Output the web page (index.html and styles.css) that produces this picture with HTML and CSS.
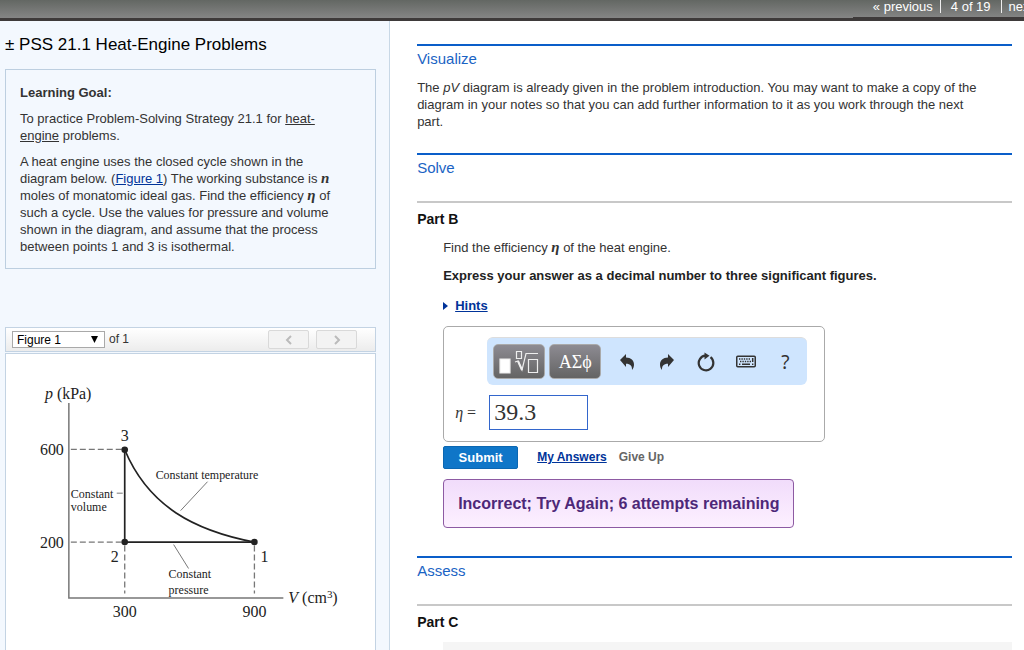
FILE: index.html
```html
<!DOCTYPE html>
<html lang="en">
<head>
<meta charset="utf-8">
<title>PSS 21.1 Heat-Engine Problems</title>
<link rel="stylesheet" href="styles.css">
</head>
<body>
<header class="topbar">
  <nav class="pager" aria-label="Items">
    <a class="pager-link" href="#">« previous</a>
    <span class="pager-count">4 of 19</span>
    <a class="pager-link" href="#">next »</a>
  </nav>
</header>
<div class="page">
  <aside class="side">
    <h1 class="title">± PSS 21.1 Heat-Engine Problems</h1>
    <section class="goal">
      <h2 class="goal-title">Learning Goal:</h2>
      <p class="goal-text">To practice Problem-Solving Strategy 21.1 for <a class="term" href="#">heat-<br>engine</a> problems.</p>
      <p class="goal-text">A heat engine uses the closed cycle shown in the diagram below. (<a class="link" href="#figure">Figure 1</a>) The working substance is <i class="math">n</i> moles of monatomic ideal gas. Find the efficiency <i class="math">η</i> of such a cycle. Use the values for pressure and volume shown in the diagram, and assume that the process between points 1 and 3 is isothermal.</p>
    </section>
    <div class="figbar">
      <div class="select-wrap">
        <select class="figselect" id="figselect" aria-label="Figure"><option>Figure 1</option></select>
        <svg class="caret" viewBox="0 0 7 7" aria-hidden="true"><path d="M0 0h7L3.500 7z"/></svg>
      </div>
      <label class="figcount" for="figselect">of 1</label>
      <div class="fignav">
        <button class="figbtn" type="button" aria-label="Previous figure"><svg viewBox="0 0 8 10"><path d="M6 1L2 5l4 4"/></svg></button>
        <button class="figbtn" type="button" aria-label="Next figure"><svg viewBox="0 0 8 10"><path d="M2 1l4 4-4 4"/></svg></button>
      </div>
    </div>
    <div class="figure" id="figure">
      <svg class="diagram" viewBox="0 0 370 296" role="img" aria-label="pV diagram">
        <g class="axis"><path d="M63 49V244.500H278"/></g>
        <g class="dash"><path d="M65 95.500H118M65 188.500H118M119 192V240M249 192V240"/></g>
        <g class="lead"><path d="M202 128L175 157M168 191L183 215M111 139.500H117"/></g>
        <g class="curve"><path d="M119 96V188.500H249"/><path d="M119 96C143 153 189 177 249 188.500"/></g>
        <circle cx="119" cy="96" r="3.300"/><circle cx="119" cy="188.500" r="3.300"/><circle cx="249" cy="188.500" r="3.300"/>
        <g class="big">
          <text x="39" y="45"><tspan font-style="italic">p</tspan> (kPa)</text>
          <text x="34" y="101">600</text><text x="34" y="194">200</text>
          <text x="115" y="87">3</text><text x="105" y="208">2</text><text x="255" y="208">1</text>
          <text x="107" y="264">300</text><text x="237" y="264">900</text>
          <text x="283" y="250"><tspan font-style="italic">V</tspan> (cm<tspan class="sup" dy="-5">3</tspan><tspan dy="5">)</tspan></text>
        </g>
        <g class="small">
          <text x="150" y="125">Constant temperature</text>
          <text x="65" y="144">Constant</text><text x="65" y="157">volume</text>
          <text x="163" y="225">Constant</text><text x="163" y="241">pressure</text>
        </g>
      </svg>
    </div>
  </aside>
  <main class="main">
    <section class="step">
      <h2 class="step-title">Visualize</h2>
      <p class="step-text">The <i>pV</i> diagram is already given in the problem introduction. You may want to make a copy of the diagram in your notes so that you can add further information to it as you work through the next part.</p>
    </section>
    <section class="step">
      <h2 class="step-title">Solve</h2>
    </section>
    <section class="part">
      <h3 class="part-title">Part B</h3>
      <div class="part-body">
        <p class="ask">Find the efficiency <i class="math">η</i> of the heat engine.</p>
        <p class="express">Express your answer as a decimal number to three significant figures.</p>
        <p class="hints"><svg class="tri" viewBox="0 0 5 8" aria-hidden="true"><path d="M0 0l5 4-5 4z"/></svg><a class="link" href="#">Hints</a></p>
        <form class="answer">
          <div class="tools">
            <button class="palette" type="button" aria-label="Templates">
              <svg class="root-icon" viewBox="0 0 42 26"><path class="solid" d="M2 10h10v14H2z"/><path d="M18.500 2.500h5v7h-5zM30.500 10.500h9v13h-9z"/><path d="M17 13l3-1 4 9L28 4.500H40"/><path class="thick" d="M20 12l4 9"/></svg>
            </button>
            <button class="palette greek" type="button">ΑΣϕ</button>
            <button class="tool" type="button" aria-label="Undo"><svg viewBox="0 0 16 18"><path class="fill" d="M1 7L7 1v3.500c5 0 8 3 8 7 0 2-.6 4-2 5.500 .3-4-1.500-6.300-6-6.300V14z"/></svg></button>
            <button class="tool" type="button" aria-label="Redo"><svg viewBox="0 0 16 18"><path class="fill" d="M15 7L9 1v3.500c-5 0-8 3-8 7 0 2 .6 4 2 5.500-.3-4 1.500-6.300 6-6.300V14z"/></svg></button>
            <button class="tool reset" type="button" aria-label="Reset"><svg viewBox="0 0 20 20"><path class="stroke" d="M14.500 5.200A7.300 7.300 0 1 1 9.500 3.700"/><path class="fill" d="M8.500 .5l5 3.300-5 3.700z"/></svg></button>
            <button class="tool keys" type="button" aria-label="Keyboard shortcuts"><svg viewBox="0 0 20 13"><rect class="frame" x=".75" y="1.250" width="18.500" height="10.500" rx="1"/><path class="dots" d="M3 4h12M4 6.500h11M3 9.300h1.500M16 9.300h1.500"/><path class="bar" d="M6 9.300h8M16.700 3v4"/></svg></button>
            <button class="tool help" type="button" aria-label="Help">?</button>
          </div>
          <div class="entry">
            <label class="entry-label" for="eta"><i>η</i> =</label>
            <input class="entry-input" id="eta" type="text" value="39.3">
          </div>
        </form>
        <div class="actions">
          <button class="submit" type="button">Submit</button>
          <a class="link my" href="#">My Answers</a>
          <a class="giveup" href="#">Give Up</a>
        </div>
        <div class="feedback" role="status">Incorrect; Try Again; 6 attempts remaining</div>
      </div>
    </section>
    <section class="step">
      <h2 class="step-title">Assess</h2>
    </section>
    <section class="part">
      <h3 class="part-title">Part C</h3>
      <div class="part-body locked"></div>
    </section>
  </main>
</div>
</body>
</html>
```
FILE: styles.css
```css
* { box-sizing: border-box; }
body {
  margin: 0;
  height: 100vh;
  overflow: hidden;
  display: flex;
  flex-direction: column;
  font: 13px/17px "Liberation Sans", Arial, sans-serif;
  color: #333;
  background: #fff;
}
h1, h2, h3, p { margin: 0; }
button, select, input { font: inherit; color: inherit; }
.link { color: #039; text-decoration: underline; }

.topbar {
  flex: none;
  display: flex;
  height: 21px;
  overflow: hidden;
  background: linear-gradient(#636763, #858585);
  border-bottom: 3px solid #3e3a3a;
}
.pager {
  display: flex;
  align-items: flex-start;
  margin-left: auto;
  margin-right: -20px;
  padding-left: 20px;
  line-height: 14px;
  color: #fff;
  border-bottom: 1px solid #3e3a3a;
}
.pager-link { color: #fff; text-decoration: none; }
.pager-count { margin: 0 7px; padding: 0 10px; border: solid #eee; border-width: 0 1px; height: 13px; }

.page { flex: 1; display: flex; min-height: 0; }
.side {
  flex: none;
  width: 38.1%;
  display: flex;
  flex-direction: column;
  padding: 13px 13px 0 5px;
  background: #f3f8fe;
  border-right: 1px solid #c8d8e6;
  overflow: hidden;
}
.title { font-size: 17px; line-height: 22px; font-weight: normal; color: #000; }
.goal { margin-top: 13px; padding: 14px 28px 13px 14px; border: 1px solid #bdcfe0; }
.goal-title { font-size: 13px; line-height: 17px; }
.goal-text { margin-top: 9px; }
.term { color: #333; }
.math { font: italic bold 15px/16px "Liberation Serif", "Times New Roman", serif; }

.figbar {
  display: flex;
  align-items: center;
  flex: none;
  height: 25px;
  margin-top: 58px;
  padding: 0 18px 0 6px;
  border: 1px solid #c3d3e3;
  background: linear-gradient(#fff, #ececec);
}
.select-wrap { position: relative; display: flex; }
.figselect {
  appearance: none;
  width: 93px;
  height: 17px;
  padding: 0 4px;
  font-size: 12px;
  line-height: 14px;
  color: #000;
  background: #fff;
  border: 1px solid #a9a9a9;
  border-radius: 0;
}
.caret { position: absolute; right: 7px; top: 5px; width: 7px; height: 7px; pointer-events: none; }
.figcount { margin-left: 4px; font-size: 12px; }
.fignav { display: flex; gap: 7px; margin-left: auto; }
.figbtn {
  width: 41px;
  height: 19px;
  padding: 0;
  display: flex;
  align-items: center;
  justify-content: center;
  border: 1px solid #d9d9d9;
  border-radius: 2px;
  background: #f3f3f3;
}
.figbtn svg { width: 8px; height: 10px; fill: none; stroke: #bbb; stroke-width: 2; }
.figure { flex: 1; margin-top: 1px; background: #fff; border: 1px solid #c3d3e3; border-bottom: 0; }
.diagram { display: block; width: 100%; max-width: 370px; font-family: "Liberation Serif", "Times New Roman", serif; fill: #222; }
.axis { fill: none; stroke: #777; stroke-width: 1.5; }
.dash { fill: none; stroke: #777; stroke-width: 1.3; stroke-dasharray: 6 3; }
.lead { fill: none; stroke: #777; stroke-width: 1; }
.curve { fill: none; stroke: #222; stroke-width: 1.7; }
.big { font-size: 16px; }
.small { font-size: 12px; }
.sup { font-size: 11px; }

.main { flex: 1; min-width: 0; padding: 23px 12px 0 27px; overflow: hidden; }
.step { border-top: 2px solid #0a5ec9; }
.step-title { padding-top: 4px; font-size: 15px; line-height: 18px; font-weight: normal; color: #1a63c4; }
.step-text { margin: 11px 0 23px; padding-right: 24px; }
.part { margin-top: 24px; border-top: 2px solid #c8c8c8; }
.part-title { padding-top: 6px; font-size: 14px; line-height: 20px; color: #111; }
.part-body { margin: 10px 0 28px 26px; }
.express { margin-top: 11px; font-weight: bold; color: #222; }
.hints { display: flex; align-items: center; gap: 7px; margin-top: 13px; font-weight: bold; }
.tri { width: 5px; height: 8px; fill: #039; }
.answer { width: 382px; max-width: 100%; margin-top: 12px; padding: 10px 17px 11px 11px; border: 1px solid #aaa; border-radius: 5px; }
.tools {
  display: flex;
  align-items: center;
  height: 48px;
  margin-left: 32px;
  padding: 0 2px 0 6px;
  background: #cfe5fe;
  border-top: 1px solid #ddd;
  border-radius: 6px;
}
.palette {
  display: flex;
  align-items: center;
  justify-content: center;
  width: 52px;
  height: 35px;
  margin-right: 4px;
  padding: 0;
  color: #fff;
  background: linear-gradient(#8d8b92, #646464);
  border: 1px solid #aaa;
  border-radius: 5px;
}
.greek { margin-right: 6px; font: 18px/20px "Liberation Serif", "Times New Roman", serif; }
.root-icon { width: 42px; height: 26px; fill: none; stroke: #eee; stroke-width: 1.2; }
.solid { fill: #fff; }
.thick { stroke-width: 2; }
.tool { flex: 1; display: flex; align-items: center; justify-content: center; padding: 0; border: 0; background: none; color: #333; }
.tool svg { width: 16px; height: 18px; }
.reset svg { width: 20px; height: 20px; }
.keys svg { width: 20px; height: 13px; }
.fill { fill: #333; }
.stroke { fill: none; stroke: #333; stroke-width: 2.2; }
.frame { fill: none; stroke: #333; stroke-width: 1.5; }
.dots { fill: none; stroke: #333; stroke-width: 1.4; stroke-dasharray: 1.400 1; }
.bar { stroke: #333; stroke-width: 1.5; }
.help { font: 19px/20px "Noto Sans", sans-serif; }
.entry { display: flex; align-items: center; margin-top: 10px; }
.entry-label { width: 34px; font: 16px/20px "Liberation Serif", "Times New Roman", serif; }
.entry-input {
  width: 99px;
  height: 35px;
  padding: 0 4px;
  font: 24px/30px "Liberation Serif", "Times New Roman", serif;
  border: 1px solid #36c;
}
.actions { display: flex; align-items: center; margin-top: 4px; font-size: 12px; font-weight: bold; }
.submit { width: 75px; height: 23px; padding: 0; font-size: 13px; color: #fff; background: #0f76c8; border: 1px solid #0b67b2; border-radius: 2px; }
.my { margin-left: 19px; }
.giveup { margin-left: 12px; color: #666; text-decoration: none; }
.feedback {
  width: fit-content;
  margin-top: 10px;
  padding: 14px;
  font-size: 16px;
  line-height: 19px;
  font-weight: bold;
  color: #4d2878;
  background: linear-gradient(#f1dcfb, #fdf0ff);
  border: 1px solid #8d5aa3;
  border-radius: 4px;
}
.locked { height: 60px; background: #f5f5f5; }
```
